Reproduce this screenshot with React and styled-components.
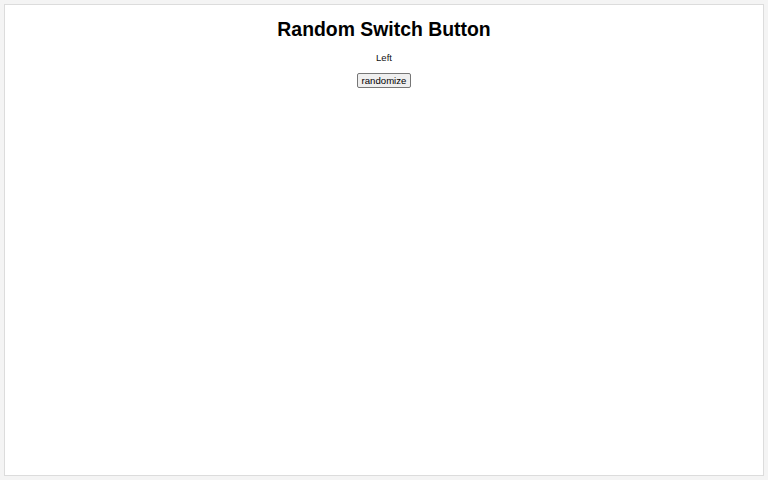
import React, { useState } from 'react';
import styled, { createGlobalStyle } from 'styled-components';

const GlobalStyle = createGlobalStyle`
  html, body {
    margin: 0;
    padding: 0;
    background: #f4f4f4;
    font-family: "Liberation Sans", Arial, sans-serif;
  }
`;

const Page = styled.div`
  padding: 4px;
  box-sizing: border-box;
  height: 480px;
`;

const Panel = styled.main`
  background: #fff;
  border: 1px solid #dcdcdc;
  height: 100%;
  box-sizing: border-box;
  display: flex;
  flex-direction: column;
  align-items: center;
`;

const Title = styled.h1`
  margin: 13px 0 0;
  font-size: 19.4px;
  line-height: 23px;
  font-weight: bold;
  color: #000;
`;

const Label = styled.div`
  margin-top: 11px;
  font-size: 9.5px;
  line-height: 11px;
  font-weight: normal;
  color: #111;
`;

const Button = styled.button`
  margin-top: 10px;
  font-family: "Liberation Sans", Arial, sans-serif;
  font-size: 9.6px;
  line-height: 11px;
  padding: 1px 4px;
  background: #efefef;
  border: 1px solid #767676;
  border-radius: 2px;
  color: #000;
`;

export default function App() {
  const [side, setSide] = useState('Left');

  return (
    <>
      <GlobalStyle />
      <Page>
        <Panel>
          <Title>Random Switch Button</Title>
          <Label>{side}</Label>
          <Button onClick={() => setSide(Math.random() < 0.5 ? 'Left' : 'Right')}>
            randomize
          </Button>
        </Panel>
      </Page>
    </>
  );
}
